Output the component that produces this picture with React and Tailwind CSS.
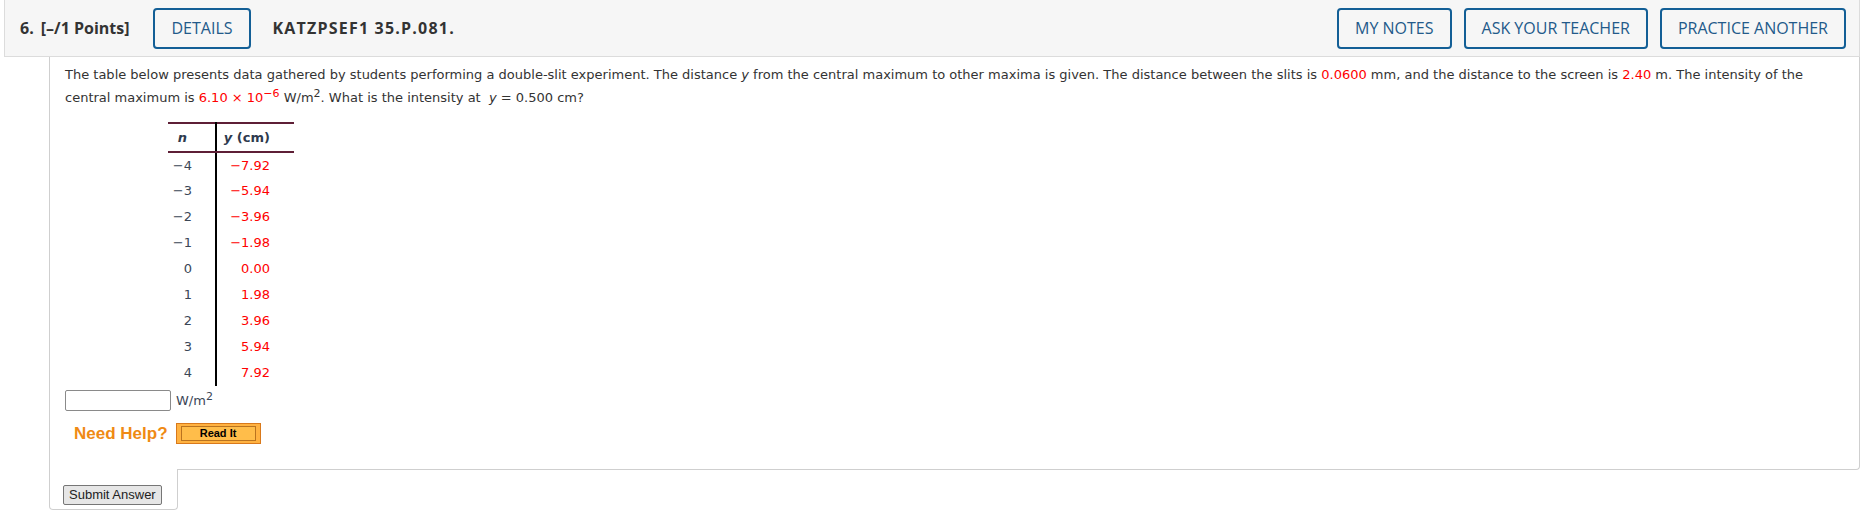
import React from "react";

const rows = [
  ["\u22124", "\u22127.92"],
  ["\u22123", "\u22125.94"],
  ["\u22122", "\u22123.96"],
  ["\u22121", "\u22121.98"],
  ["0", "0.00"],
  ["1", "1.98"],
  ["2", "3.96"],
  ["3", "5.94"],
  ["4", "7.92"],
];

const verdana = { fontFamily: '"DejaVu Sans", Verdana, sans-serif' };

function HeaderButton({ children }) {
  return (
    <div className="h-[41px] px-[16px] flex items-center border-2 border-[#135f96] rounded-[4px] text-[16px] text-[#235a8a] font-medium bg-[#f6f6f6]">
      {children}
    </div>
  );
}

export default function App() {
  return (
    <div
      className="w-[1872px] h-[522px] bg-white overflow-hidden"
      style={{ fontFamily: '"Open Sans", "Liberation Sans", sans-serif' }}
    >
      <div className="ml-[4px] w-[1856px]">
        {/* header */}
        <div className="h-[57px] bg-[#f6f6f6] border-l border-r border-b border-[#dcdcdc] flex items-center justify-between pl-[15px] pr-[13px]">
          <div className="flex items-center text-[16px] font-bold text-[#333]">
            <span>6.</span>
            <span className="ml-[7px]">[–/1 Points]</span>
            <div className="ml-[24px]">
              <HeaderButton>DETAILS</HeaderButton>
            </div>
            <span className="ml-[22px] tracking-[1.2px]">KATZPSEF1 35.P.081.</span>
          </div>
          <div className="flex items-center gap-[12px]">
            <HeaderButton>MY NOTES</HeaderButton>
            <HeaderButton>ASK YOUR TEACHER</HeaderButton>
            <HeaderButton>PRACTICE ANOTHER</HeaderButton>
          </div>
        </div>

        {/* content box */}
        <div className="ml-[45px] w-[1811px]">
          <div className="h-[413px] border-l border-r border-b border-[#cfcfcf] rounded-br-[4px] pl-[15px] pt-[7px]">
            <div className="text-[13px] text-[#333]" style={verdana}>
              <div className="h-[22px] leading-[22px] whitespace-nowrap">
                The table below presents data gathered by students performing a double-slit experiment. The distance <i>y</i> from the central maximum to other maxima is given. The distance between the slits is <span className="text-[#f00]">0.0600</span> mm, and the distance to the screen is <span className="text-[#f00]">2.40</span> m. The intensity of the
              </div>
              <div className="h-[22px] leading-[22px] whitespace-nowrap mt-[1px]">
                central maximum is <span className="text-[#f00]">6.10 × 10<sup className="text-[11px] leading-none">−6</sup></span> W/m<sup className="text-[11px] leading-none">2</sup>. What is the intensity at&nbsp; <i>y</i> = 0.500 cm?
              </div>
            </div>

            {/* table */}
            <div className="ml-[103px] mt-[13px]" style={verdana}>
              <table className="border-collapse text-[13px]">
                <thead>
                  <tr className="h-[29px]">
                    <th className="w-[48px] border-t-2 border-b-2 border-t-[#5e1f36] border-b-[#5e1f36] border-r-2 border-r-black text-right pr-[28px] font-bold italic text-[#2e3a4e]">
                      n
                    </th>
                    <th className="w-[78px] border-t-2 border-b-2 border-[#5e1f36] text-right pr-[24px] font-bold text-[#2e3a4e]">
                      <i>y</i> (cm)
                    </th>
                  </tr>
                </thead>
                <tbody>
                  {rows.map(([n, y]) => (
                    <tr key={n} className="h-[26px]">
                      <td className="border-r-2 border-black text-right pr-[23px] text-[#3b4656]">
                        {n}
                      </td>
                      <td className="text-right pr-[24px] text-[#f00]">{y}</td>
                    </tr>
                  ))}
                </tbody>
              </table>
            </div>

            {/* answer input */}
            <div className="flex items-start mt-[4px]">
              <div className="w-[106px] h-[21px] border border-[#8a8a8a] rounded-[2px] bg-white" />
              <span className="ml-[5px] text-[13px] text-[#3b4656] leading-[22px]" style={verdana}>
                W/m<sup className="text-[11px] leading-none">2</sup>
              </span>
            </div>

            {/* need help */}
            <div className="flex items-center mt-[9px] ml-[9px]">
              <span
                className="text-[17px] font-bold text-[#ef8a14]"
                style={{ fontFamily: '"Liberation Sans", Arial, sans-serif' }}
              >
                Need Help?
              </span>
              <div className="ml-[8px] w-[85px] h-[21px] bg-[#ffb241] border border-[#d9791b] flex items-center justify-center">
                <div
                  className="w-[75px] h-[15px] bg-[#ffbd4a] border border-[#b9731f] flex items-center justify-center text-[11px] font-bold text-black leading-none"
                  style={{ fontFamily: '"Liberation Sans", Arial, sans-serif' }}
                >
                  Read It
                </div>
              </div>
            </div>
          </div>

          {/* submit tab */}
          <div className="-mt-px w-[129px] h-[41px] bg-white border-l border-r border-b border-[#cfcfcf] rounded-b-[4px] pl-[13px] pt-[12px]">
            <button
              className="h-[20px] px-[5px] bg-[#e6e6e6] border border-[#767676] rounded-[2px] text-[13px] text-[#222] leading-none"
              style={{ fontFamily: '"Liberation Sans", Arial, sans-serif' }}
            >
              Submit Answer
            </button>
          </div>
        </div>
      </div>
    </div>
  );
}
